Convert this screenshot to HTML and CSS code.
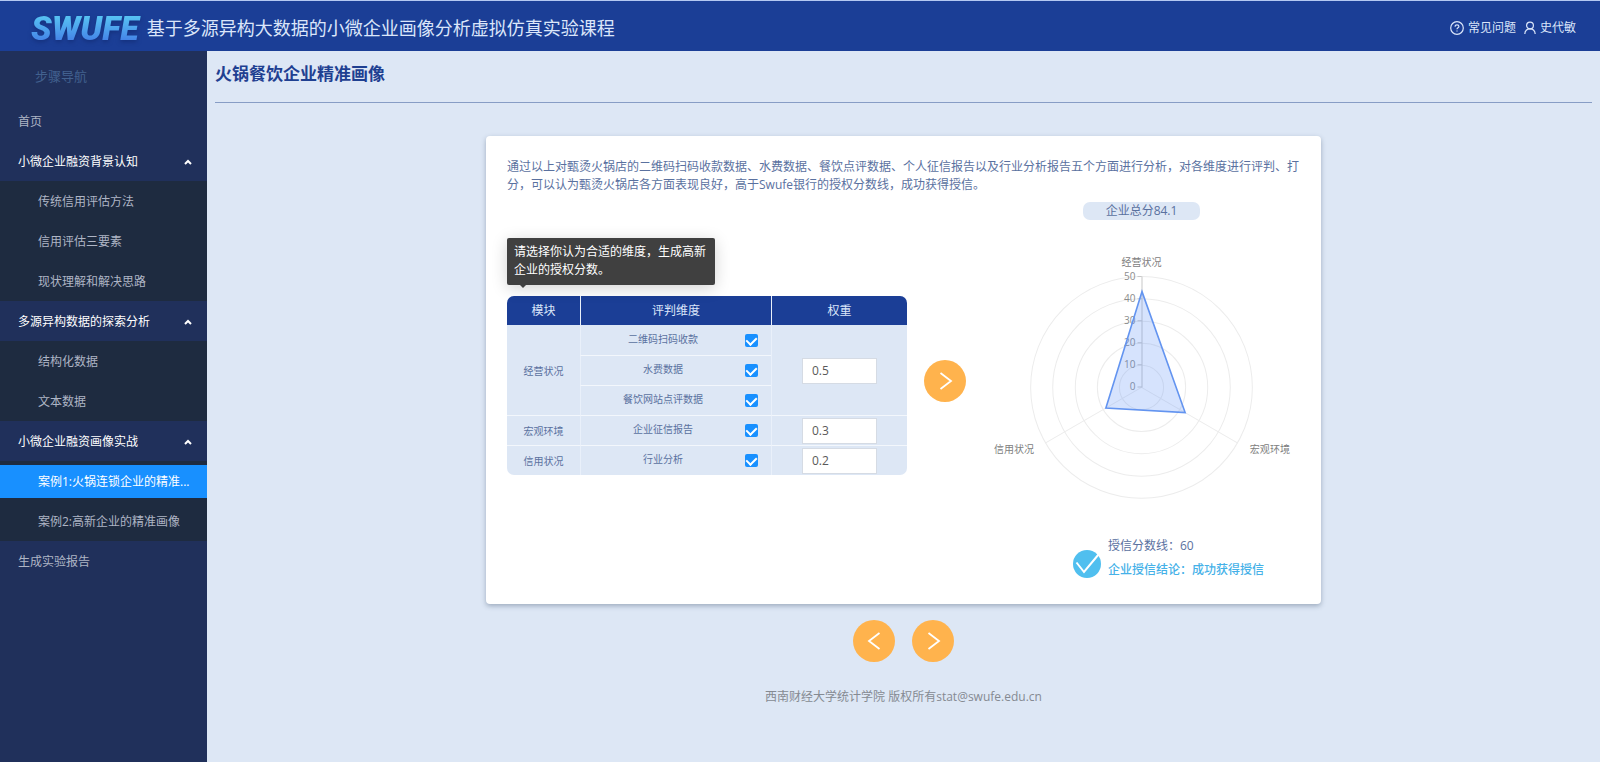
FILE: index.html
```html
<!DOCTYPE html>
<html lang="zh-CN">
<head>
<meta charset="utf-8">
<title>基于多源异构大数据的小微企业画像分析虚拟仿真实验课程</title>
<link rel="stylesheet" href="styles.css">
</head>
<body>
<header class="topbar">
  <span class="logo">SWUFE</span>
  <span class="course-title">基于多源异构大数据的小微企业画像分析虚拟仿真实验课程</span>
  <nav class="user-links">
    <a class="user-link" href="#faq">
      <svg class="link-icon" width="14" height="14" viewBox="0 0 14 14" aria-hidden="true"><circle cx="7" cy="7" r="6.3"/><path d="M5.1 5.7C5.1 4.4 5.9 3.8 7 3.8s1.9.7 1.9 1.7C8.900 6.800 7 6.900 7 8.300M7 9.500v1"/></svg>
      <span>常见问题</span>
    </a>
    <a class="user-link" href="#user">
      <svg class="link-icon" width="12" height="14" viewBox="0 0 12 14" aria-hidden="true"><circle cx="6" cy="4.500" r="3.400"/><path d="M.8 13C1 10 2.900 7.900 6 7.900S11 10 11.200 13"/></svg>
      <span>史代敏</span>
    </a>
  </nav>
</header>
<div class="shell">
  <nav class="sidebar">
    <h2 class="side-title">步骤导航</h2>
    <a class="side-link" href="#home">首页</a>
    <button class="side-group" type="button">小微企业融资背景认知<svg class="chevron" width="8" height="6" viewBox="0 0 8 6" aria-hidden="true"><path d="M1 5l3-3 3 3"/></svg></button>
    <ul class="submenu">
      <li><a class="sub-link" href="#m1">传统信用评估方法</a></li>
      <li><a class="sub-link" href="#m2">信用评估三要素</a></li>
      <li><a class="sub-link" href="#m3">现状理解和解决思路</a></li>
    </ul>
    <button class="side-group" type="button">多源异构数据的探索分析<svg class="chevron" width="8" height="6" viewBox="0 0 8 6" aria-hidden="true"><path d="M1 5l3-3 3 3"/></svg></button>
    <ul class="submenu">
      <li><a class="sub-link" href="#m4">结构化数据</a></li>
      <li><a class="sub-link" href="#m5">文本数据</a></li>
    </ul>
    <button class="side-group" type="button">小微企业融资画像实战<svg class="chevron" width="8" height="6" viewBox="0 0 8 6" aria-hidden="true"><path d="M1 5l3-3 3 3"/></svg></button>
    <ul class="submenu">
      <li><a class="sub-link active" href="#m6">案例1:火锅连锁企业的精准...</a></li>
      <li><a class="sub-link" href="#m7">案例2:高新企业的精准画像</a></li>
    </ul>
    <a class="side-link" href="#report">生成实验报告</a>
  </nav>
  <main class="content">
    <h1 class="page-title">火锅餐饮企业精准画像</h1>
    <section class="card">
      <p class="intro">通过以上对甄烫火锅店的二维码扫码收款数据、水费数据、餐饮点评数据、个人征信报告以及行业分析报告五个方面进行分析，对各维度进行评判、打分，可以认为甄烫火锅店各方面表现良好，高于Swufe银行的授权分数线，成功获得授信。</p>
      <div class="card-body">
        <div class="scoring">
          <div class="tooltip" role="tooltip">请选择你认为合适的维度，生成高新企业的授权分数。</div>
          <table class="weights">
            <colgroup><col class="col-module"><col class="col-dimension"><col class="col-weight"></colgroup>
            <thead>
              <tr><th>模块</th><th>评判维度</th><th>权重</th></tr>
            </thead>
            <tbody>
              <tr>
                <td rowspan="3"><label for="w1">经营状况</label></td>
                <td><div class="dimension"><label for="d1">二维码扫码收款</label><input class="tick" type="checkbox" id="d1" checked></div></td>
                <td rowspan="3"><input class="weight" type="text" id="w1" value="0.5"></td>
              </tr>
              <tr><td><div class="dimension"><label for="d2">水费数据</label><input class="tick" type="checkbox" id="d2" checked></div></td></tr>
              <tr><td><div class="dimension"><label for="d3">餐饮网站点评数据</label><input class="tick" type="checkbox" id="d3" checked></div></td></tr>
              <tr>
                <td><label for="w2">宏观环境</label></td>
                <td><div class="dimension"><label for="d4">企业征信报告</label><input class="tick" type="checkbox" id="d4" checked></div></td>
                <td><input class="weight" type="text" id="w2" value="0.3"></td>
              </tr>
              <tr>
                <td><label for="w3">信用状况</label></td>
                <td><div class="dimension"><label for="d5">行业分析</label><input class="tick" type="checkbox" id="d5" checked></div></td>
                <td><input class="weight" type="text" id="w3" value="0.2"></td>
              </tr>
            </tbody>
          </table>
        </div>
        <button class="round-button generate" type="button" aria-label="生成"><svg width="42" height="42" viewBox="0 0 42 42" aria-hidden="true"><path d="M16.500 13l10.500 8-10.500 8"/></svg></button>
        <div class="result">
          <div class="total">企业总分84.1</div>
          <svg class="radar" viewBox="0 0 316 260" role="img" aria-label="企业画像雷达图">
            <g class="grid">
              <circle cx="158" cy="137" r="22"/><circle cx="158" cy="137" r="44"/><circle cx="158" cy="137" r="66"/><circle cx="158" cy="137" r="88.500"/><circle cx="158" cy="137" r="110.500"/>
              <path d="M158 137l96 55.500M158 137l-96 55.500"/>
            </g>
            <path class="axis" d="M158.500 26.500V137M154 26.500h4M154 48.500h4M154 70.500h4M154 92.500h4M154 114.500h4M154 136.500h4"/>
            <g class="scale">
              <text x="152" y="30">50</text><text x="152" y="52">40</text><text x="152" y="74">30</text><text x="152" y="96">20</text><text x="152" y="118">10</text><text x="152" y="140">0</text>
            </g>
            <g class="names">
              <text x="158" y="16">经营状况</text><text x="31" y="202">信用状况</text><text x="286" y="202">宏观环境</text>
            </g>
            <path class="area" d="M158.500 41.500L201.500 162 122.500 157.500z"/>
          </svg>
          <div class="verdict">
            <svg class="verdict-icon" width="28" height="28" viewBox="0 0 28 28" aria-hidden="true"><circle cx="14" cy="14" r="14"/><path d="M3.500 12.500l7.500 9.500L25.500 4.500"/></svg>
            <div>
              <p class="threshold">授信分数线：60</p>
              <p class="conclusion">企业授信结论：成功获得授信</p>
            </div>
          </div>
        </div>
      </div>
    </section>
    <div class="pager">
      <button class="round-button" type="button" aria-label="上一步"><svg width="42" height="42" viewBox="0 0 42 42" aria-hidden="true"><path d="M26.500 13L16 21l10.500 8"/></svg></button>
      <button class="round-button" type="button" aria-label="下一步"><svg width="42" height="42" viewBox="0 0 42 42" aria-hidden="true"><path d="M16.500 13l10.500 8-10.500 8"/></svg></button>
    </div>
    <footer class="copyright">西南财经大学统计学院 版权所有stat@swufe.edu.cn</footer>
  </main>
</div>
</body>
</html>
```
FILE: styles.css
```css
* {
  box-sizing: border-box;
}

body {
  margin: 0;
  min-height: 100vh;
  display: flex;
  flex-direction: column;
  font: 12px/18px "Open Sans", "Noto Sans CJK SC", sans-serif;
  background: #dde7f5;
  color: #5a719f;
}

h1, h2, p, ul {
  margin: 0;
  padding: 0;
}

ul {
  list-style: none;
}

a {
  color: inherit;
  text-decoration: none;
}

button, input {
  font: inherit;
}

.topbar {
  display: flex;
  align-items: center;
  height: 51px;
  padding: 3px 24px 0 31px;
  border-top: 1px solid #b4c8f2;
  background: #1b3e96;
  color: #dbe6fa;
}

.logo {
  padding-right: 4px;
  font: italic 900 34px/40px Roboto, sans-serif;
  color: transparent;
  background: linear-gradient(#57c3f3 20%, #4585e8 80%);
  background-clip: text;
  filter: drop-shadow(0 2px 2px #14307c);
}

.course-title {
  margin-left: 4px;
  font-size: 18px;
  line-height: 26px;
}

.user-links {
  display: flex;
  gap: 8px;
  margin-left: auto;
}

.user-link {
  display: flex;
  align-items: center;
  gap: 4px;
}

.link-icon {
  fill: none;
  stroke: currentColor;
  stroke-width: 1.2;
}

.shell {
  display: flex;
  flex: 1;
}

.sidebar {
  flex: 0 0 207px;
  background: #20305b;
  color: #aeb5c5;
}

.side-title {
  padding: 15px 35px;
  font-size: 13px;
  font-weight: 400;
  line-height: 20px;
  color: #42618f;
}

.side-link,
.side-group {
  display: flex;
  align-items: center;
  width: 100%;
  height: 40px;
  padding: 2px 15px 0 18px;
}

.side-group {
  justify-content: space-between;
  border: 0;
  background: none;
  color: #fff;
}

.chevron {
  fill: none;
  stroke: currentColor;
  stroke-width: 2;
}

.submenu {
  display: grid;
  gap: 7px;
  padding: 4px 0 3px;
  background: #1e2b40;
}

.sub-link {
  display: block;
  padding-left: 38px;
  line-height: 33px;
  white-space: nowrap;
}

.sub-link.active {
  background: #1890ff;
  color: #fff;
}

.content {
  flex: 1;
  min-width: 0;
  padding: 0 8px 24px;
}

.page-title {
  margin-bottom: 33px;
  padding: 11px 0 16px;
  border-bottom: 1px solid #879dc5;
  font-size: 17px;
  font-weight: 700;
  line-height: 24px;
  color: #1f4091;
}

.card {
  max-width: 835px;
  margin: 0 auto;
  padding: 22px 21px;
  border-radius: 4px;
  background: #fff;
  box-shadow: 0 2px 5px rgba(40, 60, 90, .35);
}

.card-body {
  display: grid;
  grid-template-columns: 400px 42px 1fr;
  gap: 17px;
  margin-top: 8px;
}

.scoring {
  padding-top: 36px;
}

.tooltip {
  position: relative;
  width: 208px;
  margin-bottom: 11px;
  padding: 5px 6px 6px 7px;
  border-radius: 2px;
  background: #404040;
  color: #fff;
  box-shadow: 0 3px 16px rgba(0, 0, 0, .18);
}

.tooltip::after {
  content: "";
  position: absolute;
  left: 13px;
  top: 100%;
  border: 3px solid transparent;
  border-top-color: #404040;
}

.weights {
  width: 100%;
  border-spacing: 0;
  border-radius: 7px;
  overflow: hidden;
  table-layout: fixed;
  background: #dde7f5;
  font-size: 10px;
  text-align: center;
}

.col-module {
  width: 73px;
}

.col-dimension {
  width: 191px;
}

.weights th {
  height: 29px;
  padding: 0;
  background: #1b3e96;
  color: #dbe6fa;
  font-size: 12px;
  font-weight: 400;
}

.weights td {
  height: 30px;
  padding: 0;
  border-top: 1px solid #f3f7fc;
}

.weights tbody tr:first-child td {
  border-top: 1px solid #dde7f5;
}

.weights th + th,
.weights td + td {
  border-left: 1px solid #e9f0fa;
}

.weights tr > td:only-child {
  border-left: 1px solid #e9f0fa;
}

.dimension {
  display: grid;
  grid-template-columns: 1fr 13px;
  align-items: center;
  padding-right: 13px;
}

.dimension label {
  padding-bottom: 3px;
}

.tick {
  appearance: none;
  display: grid;
  place-items: center;
  width: 13px;
  height: 13px;
  margin: 0;
  border-radius: 2px;
  background: #fff;
}

.tick:checked {
  background: #1890ff;
}

.tick:checked::after {
  content: "";
  width: 5px;
  height: 8px;
  margin-bottom: 2px;
  border: solid #fff;
  border-width: 0 2px 2px 0;
  transform: rotate(45deg);
}

.weight {
  display: block;
  width: 75px;
  height: 26px;
  margin: 0 auto;
  padding: 0 9px;
  border: 1px solid #d5dbe4;
  background: #fff;
  color: #595959;
  font-size: 12px;
}

.round-button {
  width: 42px;
  height: 42px;
  padding: 0;
  border: 0;
  border-radius: 50%;
  background: #ffb34d;
}

.round-button svg {
  display: block;
  fill: none;
  stroke: #fff;
  stroke-width: 1.8;
}

.generate {
  margin-top: 158px;
}

.result {
  display: flex;
  flex-direction: column;
}

.total {
  align-self: center;
  width: 117px;
  margin-bottom: 30px;
  border-radius: 7px;
  background: #dde7f5;
  text-align: center;
}

.radar {
  display: block;
  width: 100%;
  font-size: 10px;
}

.grid {
  fill: none;
  stroke: #ececec;
}

.axis {
  fill: none;
  stroke: #c8c8c8;
}

.scale {
  fill: #8c8c8c;
  text-anchor: end;
}

.names {
  fill: #808080;
  text-anchor: middle;
}

.area {
  fill: rgba(91, 143, 249, .25);
  stroke: #6394f0;
  stroke-width: 1.6;
}

.verdict {
  display: flex;
  align-items: flex-end;
  gap: 7px;
  margin: 23px 0 0 90px;
}

.verdict p {
  line-height: 24px;
}

.verdict-icon {
  margin-bottom: 4px;
  fill: #50bfef;
}

.verdict-icon path {
  fill: none;
  stroke: #fff;
  stroke-width: 2;
}

.conclusion {
  color: #45b1e8;
  font-weight: 500;
}

.pager {
  display: flex;
  justify-content: center;
  gap: 17px;
  margin-top: 16px;
}

.copyright {
  margin-top: 26px;
  text-align: center;
  color: #858a92;
}
```
